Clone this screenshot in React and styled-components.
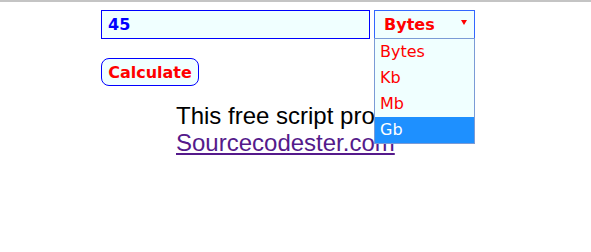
import React, { useState } from "react";
import styled, { createGlobalStyle } from "styled-components";

const GlobalStyle = createGlobalStyle`
  html, body {
    margin: 0;
    padding: 0;
    background: #ffffff;
  }
  body {
    font-family: "Liberation Sans", Arial, sans-serif;
  }
`;

const comic = `"Comic Sans MS", "DejaVu Sans", sans-serif`;

const Page = styled.div`
  border-top: 2px solid #c4c4c4;
  padding: 8px 0 0 101px;
  height: 250px;
  box-sizing: border-box;
`;

const Row = styled.div`
  display: flex;
  gap: 4px;
  align-items: flex-start;
`;

const SizeInput = styled.input`
  width: 269px;
  height: 29px;
  box-sizing: border-box;
  border: 1px solid #0000ff;
  background: #f0ffff;
  color: #0000ff;
  font-family: ${comic};
  font-weight: bold;
  font-size: 16px;
  padding: 0 6px;
  outline: none;
`;

const SelectWrap = styled.div`
  position: relative;
  width: 101px;
`;

const SelectBox = styled.div`
  height: 29px;
  box-sizing: border-box;
  border: 1px solid #3366ff;
  background: #f0ffff;
  color: #ff0000;
  font-family: ${comic};
  font-weight: bold;
  font-size: 16px;
  display: flex;
  align-items: center;
  justify-content: space-between;
  padding: 0 7px 0 9px;
`;

const Arrow = styled.span`
  width: 0;
  height: 0;
  border-left: 3px solid transparent;
  border-right: 3px solid transparent;
  border-top: 5px solid #ff0000;
  margin-top: -4px;
`;

const OptionList = styled.ul`
  position: absolute;
  top: 28px;
  left: 0;
  width: 101px;
  box-sizing: border-box;
  margin: 0;
  padding: 0;
  list-style: none;
  border: 1px solid #7b9bd6;
  background: #f0ffff;
  z-index: 10;
`;

const Option = styled.li`
  height: 26px;
  line-height: 26px;
  padding-left: 5px;
  font-family: ${comic};
  font-size: 16px;
  color: ${({ $active }) => ($active ? "#ffffff" : "#ff0000")};
  background: ${({ $active }) => ($active ? "#1e90ff" : "transparent")};
`;

const CalcButton = styled.button`
  margin-top: 19px;
  width: 98px;
  height: 28px;
  border: 1px solid #0000ff;
  border-radius: 8px;
  background: #f0ffff;
  color: #ff0000;
  font-family: ${comic};
  font-weight: bold;
  font-size: 16px;
  padding: 0;
  cursor: pointer;
`;

const Credit = styled.p`
  margin: 16px 0 0 75px;
  width: 330px;
  font-size: 24px;
  color: #000000;
  line-height: 27px;
`;

const Link = styled.a`
  color: #551a8b;
`;

const units = ["Bytes", "Kb", "Mb", "Gb"];

export default function App() {
  const [size, setSize] = useState("45");

  return (
    <>
      <GlobalStyle />
      <Page>
        <Row>
          <SizeInput value={size} onChange={(e) => setSize(e.target.value)} />
          <SelectWrap>
            <SelectBox>
              <span>Bytes</span>
              <Arrow />
            </SelectBox>
            <OptionList>
              {units.map((u) => (
                <Option key={u} $active={u === "Gb"}>
                  {u}
                </Option>
              ))}
            </OptionList>
          </SelectWrap>
        </Row>
        <CalcButton>Calculate</CalcButton>
        <Credit>
          This free script provided by <Link href="#">Sourcecodester.com</Link>
        </Credit>
      </Page>
    </>
  );
}
